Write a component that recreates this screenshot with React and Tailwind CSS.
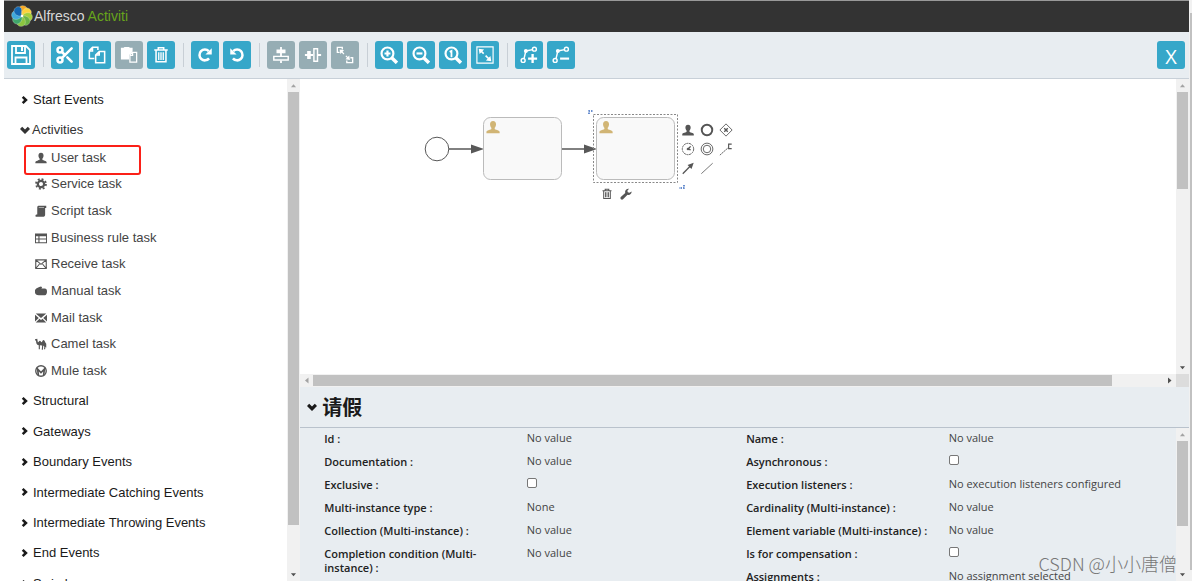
import { Scissors } from 'lucide-react'
import clsx from 'clsx'

const USER_PATH = 'M8 1c2.300 0 3.400 1.500 3.400 3.700 0 1.700-.7 3.200-1.500 4v1.600c0 .6 5.600 1.500 5.600 3.200V15H.5v-1.500c0-1.700 5.600-2.600 5.600-3.200V8.700c-.8-.8-1.500-2.300-1.500-4C4.600 2.500 5.700 1 8 1Z'

function Icon({ children, className, box = 16 }) {
  return (
    <svg viewBox={`0 0 ${box} ${box}`} className={className} fill="currentColor" aria-hidden="true">
      {children}
    </svg>
  )
}

const stroke = { fill: 'none', stroke: 'currentColor' }

const glyphs = {
  save: (
    <g {...stroke} strokeWidth="1.8">
      <path d="M1 1h14l4 4v14H1Z" />
      <path d="M5 1v7h9V1M4.500 19v-6.500h11V19" />
      <path d="M11 2v4" strokeWidth="2" />
    </g>
  ),
  copy: (
    <g {...stroke} strokeWidth="1.7">
      <path d="M11 4.500V1.500H5L1.500 5v9H7M5 2v3.500H1.500" />
      <path d="M12.500 6h6v12.500H8.500V10ZM12.500 6v4H8.500" />
    </g>
  ),
  paste: (
    <>
      <path d="M1 2h3l1-1h5l1 1h3v4l-4 4v5H1Z" />
      <path d="M13.500 7h5v11H11V9.500ZM14 7v3.500h-3" {...stroke} strokeWidth="1.400" />
    </>
  ),
  trash: (
    <g {...stroke} strokeWidth="1.700">
      <path d="M2.500 4.500h15M7 4V2h6v2M4.500 5v12.500h11V5" />
      <path d="M7.500 7v8.500M10 7v8.500M12.500 7v8.500" strokeWidth="1.500" />
    </g>
  ),
  redo: (
    <>
      <path d="M14.500 13.800A6 6 0 1 1 14.200 5.800" {...stroke} strokeWidth="2.800" />
      <path d="M17.500 2.500v7h-7Z" />
    </>
  ),
  undo: (
    <>
      <path d="M5.500 13.800A6 6 0 1 0 5.800 5.800" {...stroke} strokeWidth="2.800" />
      <path d="M2.500 2.500v7h7Z" />
    </>
  ),
  alignH: (
    <>
      <path d="M5 4h10v4H5ZM9 1h2v10H9ZM9 16h2v3H9Z" />
      <path d="M2 11.500h16v4H2Z" {...stroke} strokeWidth="1.600" />
    </>
  ),
  alignV: (
    <>
      <path d="M3.500 5.500h4v9h-4ZM1 9h9v2H1ZM15.500 9H19v2h-3.500Z" />
      <path d="M11 3h4v14h-4Z" {...stroke} strokeWidth="1.600" />
    </>
  ),
  sameSize: (
    <>
      <path d="M4 7H1.500V1.500H7V4M12 16v2.500h6.500V13H16" {...stroke} strokeWidth="1.500" />
      <path d="M4 4l5 .8-4.200 4.200ZM15.500 15.500l-5-.8 4.200-4.200Z" />
      <path d="M6 6l8 8" {...stroke} strokeWidth="1.400" strokeDasharray="4 3" />
    </>
  ),
  zoomIn: (
    <g {...stroke} strokeWidth="2.400">
      <circle cx="8.300" cy="8.300" r="6.600" />
      <path d="M13 13l5.800 5.800" strokeWidth="3.800" />
      <path d="M8.300 5v6.600M5 8.300h6.600" />
    </g>
  ),
  zoomOut: (
    <g {...stroke} strokeWidth="2.400">
      <circle cx="8.300" cy="8.300" r="6.600" />
      <path d="M13 13l5.800 5.800" strokeWidth="3.800" />
      <path d="M5 8.300h6.600" />
    </g>
  ),
  zoomActual: (
    <g {...stroke} strokeWidth="2.400">
      <circle cx="8.300" cy="8.300" r="6.600" />
      <path d="M13 13l5.800 5.800" strokeWidth="3.800" />
      <path d="M6.300 6.500l2-1v7" strokeWidth="2" />
    </g>
  ),
  zoomFit: (
    <>
      <path d="M1 1h18v18H1Z" {...stroke} strokeWidth="1.300" />
      <path d="M3 3l6 1-5 5ZM17 17l-6-1 5-5Z" />
      <path d="M5 5l10 10" {...stroke} strokeWidth="1.800" strokeDasharray="5 3" />
    </>
  ),
  bendAdd: (
    <>
      <g {...stroke} strokeWidth="1.600">
        <circle cx="3.500" cy="16" r="2.200" />
        <circle cx="16" cy="3.500" r="2.200" />
        <path d="M4.500 14L6.500 5.500L14 4" />
      </g>
      <circle cx="6.500" cy="5.500" r="2.200" />
      <path d="M14 9v10M9 14h10" {...stroke} strokeWidth="2.600" />
    </>
  ),
  bendRemove: (
    <>
      <g {...stroke} strokeWidth="1.600">
        <circle cx="3.500" cy="16" r="2.200" />
        <circle cx="16" cy="3.500" r="2.200" />
        <path d="M4.500 14L6.500 5.500L14 4" />
      </g>
      <circle cx="6.500" cy="5.500" r="2.200" />
      <path d="M9 14h10" {...stroke} strokeWidth="2.400" />
    </>
  ),
}

const toolbar = [
  [{ id: 'save', title: 'Save the model' }],
  [
    { id: 'cut', title: 'Cut' },
    { id: 'copy', title: 'Copy' },
    { id: 'paste', title: 'Paste', disabled: true },
    { id: 'trash', title: 'Delete' },
  ],
  [
    { id: 'redo', title: 'Redo' },
    { id: 'undo', title: 'Undo' },
  ],
  [
    { id: 'alignH', title: 'Align vertical', disabled: true },
    { id: 'alignV', title: 'Align horizontal', disabled: true },
    { id: 'sameSize', title: 'Same size', disabled: true },
  ],
  [
    { id: 'zoomIn', title: 'Zoom in' },
    { id: 'zoomOut', title: 'Zoom out' },
    { id: 'zoomActual', title: 'Zoom to actual size' },
    { id: 'zoomFit', title: 'Zoom to fit' },
  ],
  [
    { id: 'bendAdd', title: 'Add bend-point' },
    { id: 'bendRemove', title: 'Remove bend-point' },
  ],
]

const tasks = [
  { label: 'User task', marked: true, icon: <path d={USER_PATH} /> },
  {
    label: 'Service task',
    icon: (
      <g {...stroke}>
        <circle cx="8" cy="8" r="4.200" strokeWidth="3" />
        <circle cx="8" cy="8" r="6.600" strokeWidth="2.400" strokeDasharray="2.600 2.580" />
      </g>
    ),
  },
  {
    label: 'Script task',
    icon: <path d="M4.500 1H15v3h-1.500v9c0 1.500-.7 2.500-2 2.500H1c-.8-1.500-.3-3 1-3h1V4C3 2.500 3.300 1 4.500 1ZM5 3.200v.9h7v-.9Z" fillRule="evenodd" />,
  },
  {
    label: 'Business rule task',
    icon: <path d="M0 2h16v13H0ZM1.300 5.500v3h3.200v-3ZM6 5.500v3h8.700v-3ZM1.300 10v3.700h3.200V10ZM6 10v3.700h8.700V10Z" fillRule="evenodd" />,
  },
  {
    label: 'Receive task',
    icon: <path d="M1 2.500h14v11.500H1ZM1 2.500l7 6 7-6M1 14l5-6M15 14l-5-6" {...stroke} strokeWidth="1.500" />,
  },
  {
    label: 'Manual task',
    icon: <path d="M0 6.500C2 4 5 2.500 8 2l1.500 1L8.500 4.500H13c2 0 3 1.500 3 4s-1 5-3 5H5C2 13.500 0 12 0 10Z" />,
  },
  {
    label: 'Mail task',
    icon: <path d="M1 2h14L8 8ZM0 3.500l5 4.500-5 4.500ZM16 3.500L11 8l5 4.500ZM1 14l5-5 2 1.500L10 9l5 5Z" />,
  },
  {
    label: 'Camel task',
    icon: <path d="M0 1.500L3 1l.8 4.500c1 .5 1.500-2 2.700-2S8 5.500 8.700 5.500 10 2.500 11.500 2.500 13.500 6 15 7.500V13l-1-1.500-.5 3.500H12l.5-3.500L11 10l-.5 5.500H9L9.500 10 6.500 9.500V15H5V9.500C2 9 1.500 6.500 1.300 3.500L0 3Z" />,
  },
  {
    label: 'Mule task',
    icon: (
      <g {...stroke}>
        <circle cx="8" cy="8" r="7" strokeWidth="1.800" />
        <path d="M4.500 13.500L3.500 5.500 8 10l4.500-4.500-1 8" strokeWidth="2.200" />
      </g>
    ),
  },
]

const laterGroups = [
  'Structural',
  'Gateways',
  'Boundary Events',
  'Intermediate Catching Events',
  'Intermediate Throwing Events',
  'End Events',
  'Swimlanes',
]

const leftProps = [
  { label: 'Id', value: 'No value' },
  { label: 'Documentation', value: 'No value' },
  { label: 'Exclusive', checkbox: true },
  { label: 'Multi-instance type', value: 'None' },
  { label: 'Collection (Multi-instance)', value: 'No value' },
  { label: 'Completion condition (Multi-instance)', value: 'No value' },
]

const rightProps = [
  { label: 'Name', value: 'No value' },
  { label: 'Asynchronous', checkbox: true },
  { label: 'Execution listeners', value: 'No execution listeners configured' },
  { label: 'Cardinality (Multi-instance)', value: 'No value' },
  { label: 'Element variable (Multi-instance)', value: 'No value' },
  { label: 'Is for compensation', checkbox: true },
  { label: 'Assignments', value: 'No assignment selected' },
]

function Chevron({ down }) {
  return (
    <Icon box={10} className={down ? 'size-[10px] shrink-0' : 'h-[10px] w-2 shrink-0'}>
      <path d={down ? 'M0 4L2.200 1.800 5 4.600l2.800-2.800L10 4 5 9Z' : 'M1 2.200L3.200 0l5.300 5-5.300 5L1 7.800 3.800 5Z'} />
    </Icon>
  )
}

function ScrollV({ thumb }) {
  return (
    <div className="flex w-[13px] shrink-0 flex-col bg-[#f1f1f1] px-px" aria-hidden="true">
      <Icon box={13} className="h-[13px] shrink-0 text-[#a3a3a3]"><path d="M3.500 8.500h6l-3-3.500Z" /></Icon>
      <div className="min-h-0 flex-1">
        <div className={clsx('bg-[#c1c1c1]', thumb)} />
      </div>
      <Icon box={13} className="h-[13px] shrink-0 text-[#505050]"><path d="M3.500 5h6l-3 3.500Z" /></Icon>
    </div>
  )
}

function ScrollH() {
  return (
    <div className="flex h-[13px] shrink-0 bg-[#f1f1f1]" aria-hidden="true">
      <Icon box={13} className="w-[13px] shrink-0 text-[#a3a3a3]"><path d="M8.500 3.500v6L5 6.500Z" /></Icon>
      <div className="flex-1 py-px">
        <div className="h-full w-[94%] bg-[#c1c1c1]" />
      </div>
      <Icon box={13} className="w-[13px] shrink-0 text-[#505050]"><path d="M5 3.500v6l3.500-3Z" /></Icon>
      <div className="w-[13px] bg-[#dcdcdc]" />
    </div>
  )
}

function Logo() {
  const petals = ['#f7a823', '#fbd23c', '#a5cf3b', '#6bb345', '#8cc63f', '#3fa66b', '#3fa9dc', '#1467b3']
  return (
    <a href="#home" className="flex items-center text-sm leading-5 text-[#d8d8d8]">
      <svg viewBox="0 0 22 22" className="mr-px size-[22px]" aria-hidden="true">
        {petals.map((fill, i) => (
          <path
            key={fill}
            d="M11 11C6.500 8 6.500 1.500 11 .7c4-.6 6 2.800 4.700 5C14.800 7.400 12 8 11 11Z"
            fill={fill}
            stroke="#e8f0e0"
            strokeWidth=".3"
            transform={`rotate(${i * 45} 11 11)`}
          />
        ))}
        <circle cx="11" cy="11" r="1.300" fill="#fff" />
      </svg>
      <span>Alfresco</span>
      <span className="ml-[3px] text-[#67a51c]">Activiti</span>
    </a>
  )
}

function Toolbar() {
  return (
    <div className="flex items-center justify-between border-b border-[#c8d0d8] bg-[#e8edf1] py-[9px] pr-1 pl-[3px]">
      <div className="flex items-center gap-1">
        {toolbar.map((group, g) => (
          <div key={group[0].id} className="flex items-center gap-1">
            {g > 0 && (
              <div className="flex h-6 w-2 justify-center">
                <div className="w-px bg-[#c8cfd6]" />
              </div>
            )}
            {group.map((b) => (
              <button
                key={b.id}
                type="button"
                title={b.title}
                aria-label={b.title}
                disabled={b.disabled}
                className={clsx(
                  'flex size-7 items-center justify-center rounded-[3px] text-white',
                  b.disabled ? 'bg-[#96adb4]' : 'bg-[#36a7c9]'
                )}
              >
                {b.id === 'cut' ? (
                  <Scissors size={20} strokeWidth={3} />
                ) : (
                  <Icon box={20} className={b.id === 'save' ? 'size-5' : 'size-[18px]'}>{glyphs[b.id]}</Icon>
                )}
              </button>
            ))}
          </div>
        ))}
      </div>
      <button
        type="button"
        title="Close the editor"
        className="size-7 rounded-[3px] bg-[#36a7c9] pt-1 font-['Open_Sans',sans-serif] text-xl leading-6 text-white"
      >
        X
      </button>
    </div>
  )
}

function Group({ label, open }) {
  return (
    <button
      type="button"
      aria-expanded={!!open}
      className={clsx(
        'flex h-[30px] shrink-0 items-center text-left',
        open ? 'gap-[2px] pl-4 text-[#333]' : 'gap-1 pl-[17px] text-[#1a1a1a]'
      )}
    >
      <Chevron down={open} />
      {label}
    </button>
  )
}

function Palette() {
  return (
    <div className="flex w-1/4 shrink-0">
      <nav className="flex min-w-0 flex-1 flex-col overflow-hidden pt-[6px] text-[13px]">
        <Group label="Start Events" />
        <Group label="Activities" open />
        <ul className="grid h-60 shrink-0 auto-rows-fr text-[#444]">
          {tasks.map((t) => (
            <li key={t.label} className="relative flex items-center gap-1 pb-[2px] pl-[31px]">
              <Icon className="mt-px size-3 shrink-0 text-[#555]">{t.icon}</Icon>
              {t.label}
              {t.marked && (
                <span className="absolute top-0 left-5 h-[30px] w-[117px] rounded-[3px] border-2 border-[#fb2018]" />
              )}
            </li>
          ))}
        </ul>
        <div className="mt-px grid h-[213px] shrink-0 auto-rows-fr">
          {laterGroups.map((label) => <Group key={label} label={label} />)}
        </div>
      </nav>
      <ScrollV thumb="h-[91%]" />
    </div>
  )
}

function Diagram() {
  return (
    <svg viewBox="0 0 400 130" className="h-[130px] w-[400px]" role="img" aria-label="Process diagram">
      <g fill="none" stroke="#585858">
        <circle cx="137" cy="70" r="11.800" fill="#fff" strokeWidth="1" />
        <path d="M149 70h24M262 70h24" strokeWidth="1.600" />
      </g>
      <path d="M171 65.500l13 4.500-13 4.500ZM284 65.500l13 4.500-13 4.500Z" fill="#585858" />
      <g fill="#f9f9f9" stroke="#bbb">
        <rect x="183.500" y="38.500" width="78" height="62" rx="7" />
        <rect x="296.500" y="38.500" width="78" height="62" rx="7" />
      </g>
      <g fill="#d1b575">
        <path d={USER_PATH} transform="translate(186 41) scale(.88)" />
        <path d={USER_PATH} transform="translate(299 41) scale(.88)" />
      </g>
      <rect x="293.500" y="35.500" width="84" height="68" fill="none" stroke="#888" strokeDasharray="2 1.500" />
      <g fill="none" stroke="#3a6bc0" strokeWidth="1.500" strokeDasharray="1.500 1">
        <path d="M289 35v-3h4.500M384 106v3h-5" />
      </g>
    </svg>
  )
}

const quickActions = [
  { title: 'User task', icon: <path d={USER_PATH} transform="translate(1 1) scale(.88)" /> },
  { title: 'End event', icon: <circle cx="8" cy="8" r="6" {...stroke} strokeWidth="2.200" /> },
  { title: 'Exclusive gateway', icon: <g {...stroke}><path d="M8 1l7 7-7 7-7-7Z" /><path d="M6 6l4 4M10 6l-4 4" strokeWidth="1.600" /></g> },
  { title: 'Timer event', icon: <g {...stroke}><circle cx="8" cy="8" r="6.500" strokeDasharray="2.500 .6" /><path d="M11 5L8 8l3 1" strokeWidth="1.600" /><circle cx="8" cy="8" r="1" fill="currentColor" /></g> },
  { title: 'Throw event', icon: <g {...stroke}><circle cx="8" cy="8" r="6.700" /><circle cx="8" cy="8" r="4.300" /></g> },
  { title: 'Text annotation', icon: <g {...stroke}><path d="M1 15L10 7" strokeDasharray="2.500 .6" /><path d="M14.500 2.500H11v5h3.500" strokeWidth="1.300" /></g> },
  { title: 'Sequence flow', icon: <><path d="M2 14.500L11 5.500" {...stroke} strokeWidth="1.500" /><path d="M14.500 2l-2.500 7-4.500-4.500Z" /></> },
  { title: 'Association', icon: <path d="M1.500 14.500l13-12" {...stroke} strokeWidth=".9" /> },
]

function Canvas() {
  return (
    <div className="flex h-[295px] shrink-0 bg-white">
      <div className="relative min-w-0 flex-1 overflow-hidden">
        <Diagram />
        {/* shortcuts around the selected shape */}
        <div className="absolute top-[41px] left-[378px] grid grid-cols-3 text-[#555]">
          {quickActions.map((a) => (
            <button key={a.title} type="button" title={a.title} aria-label={a.title} className="flex size-[19px] items-center justify-center">
              <Icon className="size-[14px]">{a.icon}</Icon>
            </button>
          ))}
        </div>
        <div className="absolute top-[105px] left-[297px] flex text-[#555]">
          <button type="button" title="Delete" aria-label="Delete" className="flex size-[19px] items-center justify-center">
            <Icon box={20} className="size-3">{glyphs.trash}</Icon>
          </button>
          <button type="button" title="Change type" aria-label="Change type" className="flex size-[19px] items-center justify-center">
            <Icon className="size-3">
              <path d="M15.500 4.500c.3 3.500-3 5.500-5.500 4.500L4 15c-1.500 1.500-4.500-.5-3-3L7 6.500C6 3.500 8.500.5 12 1L9.800 3.500l.6 2.200 2.200.5Z" />
            </Icon>
          </button>
        </div>
      </div>
      <ScrollV thumb="h-[36%]" />
    </div>
  )
}

function PropList({ items }) {
  return (
    <div>
      {items.map((p) => {
        const id = p.label.toLowerCase().replace(/\W+/g, '-')
        return (
          <div key={p.label} className="flex min-h-[23px]">
            <label htmlFor={id} className="w-[48%] shrink-0 pt-1 pr-4 font-semibold">{p.label} :</label>
            {p.checkbox ? (
              <input
                id={id}
                type="checkbox"
                className="mt-1 size-[10px] appearance-none rounded-[2px] border border-[#777] bg-white"
              />
            ) : (
              <output id={id} className="pt-[3px] text-[#444]">{p.value}</output>
            )}
          </div>
        )
      })}
    </div>
  )
}

function Properties() {
  return (
    <section className="flex min-h-0 flex-1 flex-col bg-[#e8edf1]">
      <h2 className="flex h-[41px] shrink-0 items-center gap-[5px] border-b border-[#b9c2cc] pl-[7px] font-['Noto_Sans_CJK_SC',sans-serif] text-xl font-bold text-[#1a1a1a]">
        <Chevron down />
        请假
      </h2>
      <div className="flex min-h-0 flex-1">
        <div className="grid flex-1 grid-cols-2 overflow-hidden pr-2 pl-6 font-['Open_Sans',sans-serif] text-[11px] leading-[14px] text-[#222]">
          <PropList items={leftProps} />
          <PropList items={rightProps} />
        </div>
        <ScrollV thumb="h-[67%]" />
      </div>
    </section>
  )
}

export default function App() {
  return (
    <div className="flex h-screen overflow-hidden bg-white font-['Liberation_Sans',Arial,sans-serif]">
      <div className="flex min-w-0 flex-1 flex-col pl-1">
        <header className="flex h-8 shrink-0 items-center border-t border-[#999] bg-[#333] pb-px pl-[7px]">
          <Logo />
        </header>
        <Toolbar />
        <main className="flex min-h-0 flex-1">
          <Palette />
          <div className="flex min-w-0 flex-1 flex-col">
            <Canvas />
            <ScrollH />
            <Properties />
          </div>
        </main>
      </div>
      <div className="w-[3px] shrink-0 bg-[#f1f1f1] pt-[13px] pl-px" aria-hidden="true">
        <div className="h-[98%] bg-[#c1c1c1]" />
      </div>
      <div className="pointer-events-none absolute right-[15px] bottom-[6px] font-['Noto_Sans_CJK_SC',sans-serif] text-lg leading-6 font-light text-[#777]">
        CSDN @小小唐僧
      </div>
    </div>
  )
}
